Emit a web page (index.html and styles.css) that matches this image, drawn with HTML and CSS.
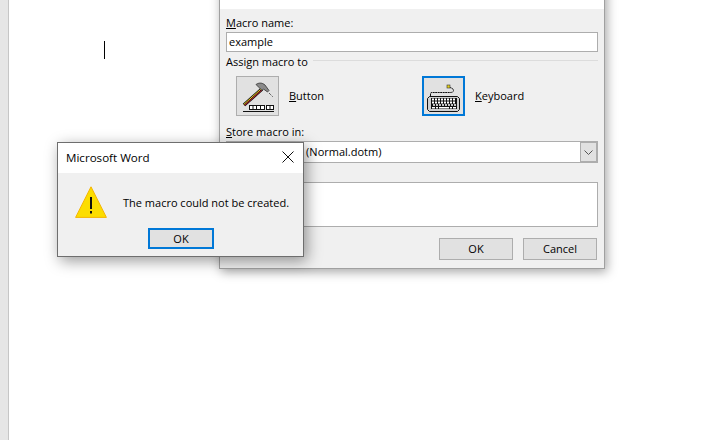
FILE: index.html
```html
<!DOCTYPE html>
<html lang="en">
<head>
  <meta charset="UTF-8" />
  <title>Record Macro</title>
  <link rel="stylesheet" href="styles.css">
</head>
<body>
  <div class="ruler"></div>
  <div class="caret"></div>

  <div class="macro-dialog">
    <div class="macro-top"></div>
    <div class="macro-body">
      <label class="field-label"><u>M</u>acro name:</label>
      <div class="textbox">example</div>

      <div class="group-title">
        <span>Assign macro to</span>
        <div class="group-line"></div>
      </div>

      <div class="assign-row">
        <div class="assign-item">
          <div class="icon-button">
            <svg width="34" height="34" viewBox="0 0 34 34">
              <path d="M3 26 L21 10" stroke="#111" stroke-width="3.6" fill="none" />
              <path d="M2.8 25.4 L20.8 9.4" stroke="#f2d21a" stroke-width="1" fill="none" />
              <path d="M3.6 26.4 L21.6 10.4" stroke="#c4202a" stroke-width="1" fill="none" />
              <path d="M15 5.5 C18 3.5 21 3.5 24 6 L28 11.5 L26.5 13 L22.5 10 L21 11.5 L18 8.5 Z" fill="#8a8a8a" stroke="#222" stroke-width="0.7" />
              <path d="M28 14 L32 18" stroke="#222" stroke-width="1" stroke-dasharray="1 1" />
              <rect x="8.5" y="26.5" width="15" height="4" fill="#fff" stroke="#111" />
              <rect x="25.5" y="26.5" width="7" height="4" fill="#fff" stroke="#111" />
              <path d="M12 26 V31 M15.5 26 V31 M19.5 26 V31 M29 26 V31" stroke="#111" />
              <path d="M2 32.5 H33" stroke="#111" />
            </svg>
          </div>
          <span class="assign-label"><u>B</u>utton</span>
        </div>
        <div class="assign-item">
          <div class="icon-button selected">
            <svg width="34" height="34" viewBox="0 0 34 34">
              <path d="M3.5 17 V14.5 Q3.5 13.5 5 13.5 H23 Q26.5 13.5 26.5 11.5 Q26.5 9.5 23 8.5" fill="none" stroke="#111" stroke-dasharray="2 0.5" />
              <rect x="20" y="6" width="3" height="3" fill="#e5d21d" stroke="#333" stroke-width="0.6" />
              <path d="M2.5 17.5 H30.5 L32.5 19.5 V30.5 L30.5 32.5 H2.5 L0.5 30.5 V19.5 Z" fill="#cfcfcf" stroke="#111" />
              <rect x="4" y="19" width="26" height="11" fill="#111" />
              <path d="M5 20.5 H29" stroke="#fff" stroke-width="2" stroke-dasharray="2 1" />
              <path d="M5 23.5 H29" stroke="#fff" stroke-width="2" stroke-dasharray="2 1" />
              <path d="M6 26 H29" stroke="#fff" stroke-width="1.6" stroke-dasharray="2 1" />
              <path d="M5 28.7 H8 M9 28.7 H11 M12 28.7 H22 M23 28.7 H25 M26 28.7 H29" stroke="#fff" stroke-width="1.4" />
            </svg>
          </div>
          <span class="assign-label"><u>K</u>eyboard</span>
        </div>
      </div>

      <label class="field-label store-label"><u>S</u>tore macro in:</label>
      <div class="combo">
        <span class="combo-text">All Documents (Normal.dotm)</span>
        <div class="combo-arrow">
          <svg width="9" height="5" viewBox="0 0 9 5"><path d="M0.5 0.5 L4.5 4.5 L8.5 0.5" fill="none" stroke="#555" /></svg>
        </div>
      </div>

      <label class="field-label desc-label"><u>D</u>escription:</label>
      <div class="textarea"></div>

      <div class="button-row">
        <div class="btn">OK</div>
        <div class="btn">Cancel</div>
      </div>
    </div>
  </div>

  <div class="word-dialog">
    <div class="word-title">
      <span>Microsoft Word</span>
      <svg width="12" height="12" viewBox="0 0 12 12"><path d="M0.5 0.5 L11.5 11.5 M11.5 0.5 L0.5 11.5" stroke="#111" fill="none" /></svg>
    </div>
    <div class="word-body">
      <div class="word-message">
        <svg width="32" height="32" viewBox="0 0 32 32">
          <path d="M16 0.8 L31.4 31.4 H0.6 Z" fill="#fcdd00" stroke="#f4b400" stroke-linejoin="round" />
          <rect x="15" y="11" width="2" height="12" fill="#111" />
          <rect x="15" y="25" width="2" height="2.5" fill="#111" />
        </svg>
        <span>The macro could not be created.</span>
      </div>
      <div class="word-buttons">
        <div class="btn word-ok">OK</div>
      </div>
    </div>
  </div>
</body>
</html>
```

FILE: styles.css
```css
html, body {
  margin: 0;
  height: 100%;
}
body {
  position: relative;
  width: 718px;
  height: 440px;
  overflow: hidden;
  background-color: #fff;
  font-family: "Open Sans", "Noto Sans", sans-serif;
  font-size: 11px;
  color: #000;
}
.ruler {
  width: 8px;
  height: 440px;
  background-color: #e6e6e6;
  border-right: 1px solid #c6c6c6;
}
.caret {
  position: absolute;
  left: 104px;
  top: 41px;
  width: 1px;
  height: 18px;
  background-color: #000;
}

/* record macro window, behind the message box */
.macro-dialog {
  position: absolute;
  left: 219px;
  top: -20px;
  width: 386px;
  height: 289px;
  background-color: #fff;
  border: 1px solid #a0a0a0;
  border-top: none;
  box-sizing: border-box;
  box-shadow: 2px 3px 10px rgba(0, 0, 0, 0.35);
  display: flex;
  flex-direction: column;
}
.macro-top {
  height: 29px;
}
.macro-body {
  flex: 1;
  background-color: #f0f0f0;
  padding: 6px 6px 0 6px;
}
.field-label {
  display: block;
  height: 17px;
  line-height: 15px;
}
.textbox {
  height: 20px;
  line-height: 18px;
  width: 372px;
  box-sizing: border-box;
  background-color: #fff;
  border: 1px solid #adadad;
  padding-left: 2px;
}
.group-title {
  display: flex;
  align-items: center;
  gap: 5px;
  height: 16px;
  margin-top: 1px;
}
.group-line {
  flex: 1;
  height: 1px;
  background-color: #dcdcdc;
  margin-bottom: 1px;
}
.assign-row {
  display: flex;
  margin-top: 7px;
  padding-left: 10px;
}
.assign-item {
  display: flex;
  align-items: center;
  gap: 10px;
  flex: none;
  width: 186px;
}
.assign-label {
  padding-bottom: 2px;
}
.icon-button {
  width: 43px;
  height: 40px;
  box-sizing: border-box;
  background-color: #e1e1e1;
  border: 1px solid #adadad;
  display: flex;
  align-items: center;
  justify-content: center;
}
.icon-button.selected {
  border: 2px solid #0078d7;
}
.store-label {
  margin-top: 8px;
}
.combo {
  width: 372px;
  height: 22px;
  box-sizing: border-box;
  background-color: #fff;
  border: 1px solid #adadad;
  display: flex;
  justify-content: space-between;
  line-height: 20px;
  padding-left: 2px;
}
.combo-arrow {
  width: 17px;
  box-sizing: border-box;
  background-color: #e1e1e1;
  border: 1px solid #adadad;
  display: flex;
  align-items: center;
  justify-content: center;
}
.desc-label {
  margin-top: 2px;
}
.textarea {
  width: 372px;
  height: 45px;
  box-sizing: border-box;
  background-color: #fff;
  border: 1px solid #adadad;
}
.button-row {
  display: flex;
  justify-content: flex-end;
  gap: 10px;
  width: 371px;
  margin-top: 11px;
}
.btn {
  width: 74px;
  height: 22px;
  line-height: 20px;
  box-sizing: border-box;
  text-align: center;
  background-color: #e1e1e1;
  border: 1px solid #adadad;
}

/* message box on top */
.word-dialog {
  position: absolute;
  left: 57px;
  top: 142px;
  width: 247px;
  height: 115px;
  box-sizing: border-box;
  border: 1px solid #6e6e6e;
  background-color: #f0f0f0;
  box-shadow: 3px 4px 14px rgba(0, 0, 0, 0.4);
  display: flex;
  flex-direction: column;
}
.word-title {
  height: 30px;
  box-sizing: border-box;
  background-color: #fff;
  display: flex;
  align-items: center;
  justify-content: space-between;
  padding: 0 9px 2px 8px;
  font-size: 11.6px;
}
.word-body {
  flex: 1;
  padding: 13px 0 0 17px;
}
.word-message {
  display: flex;
  align-items: center;
  gap: 16px;
}
.word-buttons {
  display: flex;
  margin-top: 10px;
  padding-left: 73px;
}
.word-ok {
  width: 66px;
  height: 21px;
  line-height: 17px;
  border: 2px solid #0078d7;
}
```
